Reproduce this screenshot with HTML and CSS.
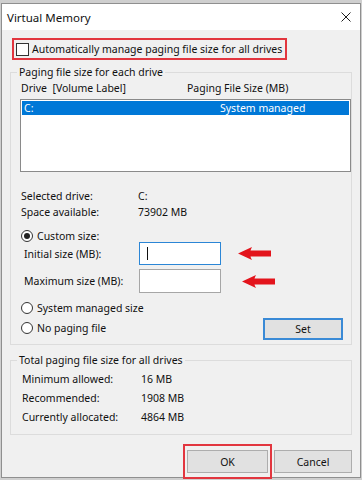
FILE: index.html
```html
<!DOCTYPE html>
<html>
<head>
<meta charset="utf-8">
<link rel="stylesheet" href="styles.css">
</head>
<body>
<div class="window">
  <div class="titlebar">
    <span class="title">Virtual Memory</span>
    <svg class="close" width="10" height="10" viewBox="0 0 10 10"><path d="M0.5 0.5 L9.5 9.5 M9.5 0.5 L0.5 9.5" stroke="#1e1e1e" stroke-width="1" fill="none"/></svg>
  </div>
  <div class="content">
    <div class="hl auto">
      <span class="checkbox"></span>
      <span>Automatically manage paging file size for all drives</span>
    </div>

    <fieldset class="group g1">
      <legend>Paging file size for each drive</legend>
      <div class="cols"><span class="c1">Drive&nbsp; [Volume Label]</span><span>Paging File Size (MB)</span></div>
      <div class="listbox">
        <div class="row sel"><span class="c1">C:</span><span class="c2">System managed</span></div>
      </div>
      <div class="info">
        <span>Selected drive:</span><span>C:</span>
        <span>Space available:</span><span>73902 MB</span>
      </div>
      <div class="radio-row custom"><span class="radio checked"></span><span>Custom size:</span></div>
      <div class="field f1">
        <span class="flabel">Initial size (MB):</span>
        <div class="input focus"><span class="caret"></span></div>
        <svg class="arrow" width="33" height="13" viewBox="0 0 33 13"><path d="M0 6.5 L14 0 Q12.5 3 12.5 3.5 L33 3.5 L33 9.5 L12.5 9.5 Q12.5 10 14 13 Z" fill="#e3141c"/></svg>
      </div>
      <div class="field f2">
        <span class="flabel">Maximum size (MB):</span>
        <div class="input"></div>
        <svg class="arrow a2" width="33" height="13" viewBox="0 0 33 13"><path d="M0 6.5 L14 0 Q12.5 3 12.5 3.5 L33 3.5 L33 9.5 L12.5 9.5 Q12.5 10 14 13 Z" fill="#e3141c"/></svg>
      </div>
      <div class="bottom">
        <div class="radios">
          <div class="radio-row"><span class="radio"></span><span>System managed size</span></div>
          <div class="radio-row"><span class="radio"></span><span>No paging file</span></div>
        </div>
        <div class="btn set">Set</div>
      </div>
    </fieldset>

    <fieldset class="group g2">
      <legend>Total paging file size for all drives</legend>
      <div class="totals">
        <span>Minimum allowed:</span><span>16 MB</span>
        <span>Recommended:</span><span>1908 MB</span>
        <span>Currently allocated:</span><span>4864 MB</span>
      </div>
    </fieldset>

    <div class="actions">
      <div class="hl okwrap"><div class="btn ok">OK</div></div>
      <div class="btn cancel">Cancel</div>
    </div>
  </div>
</div>
</body>
</html>
```

FILE: styles.css
```css
* { box-sizing: border-box; }
html, body { margin: 0; padding: 0; }
body {
  width: 362px;
  height: 480px;
  overflow: hidden;
  background: #cfcfcf;
  font-family: "Noto Sans", "Open Sans", sans-serif;
  font-size: 10.5px;
  color: #111;
}
.window {
  margin: 3px 1px 0 1px;
  height: 475px;
  border: 1px solid #8f8f8f;
  background: #f0f0f0;
  display: flex;
  flex-direction: column;
}
.titlebar {
  height: 26px;
  background: #fff;
  display: flex;
  align-items: center;
  justify-content: space-between;
  padding: 0 9px 0 5px;
  flex: none;
}
.title { font-size: 11.5px; color: #111; }
.close { display: block; }
.content {
  padding: 0 8px;
  display: flex;
  flex-direction: column;
}
.hl { border: 2px solid #e2363f; }
.auto {
  margin: 8px 0 0 2px;
  width: 275px;
  height: 22px;
  display: flex;
  align-items: center;
  padding-left: 2px;
  gap: 3px;
}
.checkbox {
  width: 13px;
  height: 13px;
  border: 1px solid #333;
  background: #fff;
  flex: none;
}
.group {
  margin: 0;
  padding: 0;
  border: 1px solid #dcdcdc;
  min-width: 0;
}
.group legend {
  margin-left: 6px;
  padding: 0 2px;
  line-height: 14px;
}
.g1 { margin-top: 5px; padding-bottom: 4px; }
.cols {
  margin-top: 2px;
  padding-left: 10px;
  height: 14px;
  line-height: 14px;
  display: flex;
}
.cols .c1 { width: 166px; }
.listbox {
  margin: 4px 0 0 9px;
  width: 331px;
  height: 73px;
  border: 1px solid #8a8a8a;
  background: #fff;
  padding: 1px;
}
.row {
  height: 14px;
  line-height: 14px;
  display: flex;
  padding-left: 2px;
}
.row.sel { background: #0078d7; color: #fff; }
.row .c1 { width: 196px; }
.info, .totals {
  display: grid;
  grid-template-columns: 117px auto;
  padding-left: 10px;
}
.info { margin-top: 16px; grid-auto-rows: 16px; line-height: 16px; }
.radio-row {
  display: flex;
  align-items: center;
  height: 16px;
  gap: 4px;
  padding-left: 10px;
}
.custom { margin-top: 8px; }
.radio {
  width: 12px;
  height: 12px;
  border: 1px solid #333;
  border-radius: 50%;
  background: #fff;
  position: relative;
  flex: none;
}
.radio.checked::after {
  content: "";
  position: absolute;
  left: 2px;
  top: 2px;
  width: 6px;
  height: 6px;
  border-radius: 50%;
  background: #222;
}
.field {
  display: flex;
  align-items: center;
  height: 23px;
  padding-left: 13px;
}
.f1 { margin-top: -2px; }
.f2 { margin-top: 4px; height: 24px; }
.f2 .input { height: 24px; }
.flabel { width: 115px; }
.input {
  width: 82px;
  height: 23px;
  border: 1px solid #a6a6a6;
  background: #fff;
  position: relative;
}
.input.focus { border-color: #2b86d6; }
.caret {
  position: absolute;
  left: 7px;
  top: 4px;
  width: 1px;
  height: 13px;
  background: #111;
}
.arrow { margin-left: 17px; display: block; }
.arrow.a2 { margin-left: 21px; }
.bottom {
  display: flex;
  justify-content: space-between;
  align-items: flex-end;
  margin-top: 7px;
  padding-right: 8px;
  height: 40px;
}
.radios { display: flex; flex-direction: column; gap: 4px; align-self: flex-start; }
.radios .radio-row { padding-left: 10px; }
.btn {
  background: #e1e1e1;
  border: 1px solid #adadad;
  display: flex;
  align-items: center;
  justify-content: center;
  color: #111;
}
.set {
  width: 80px;
  height: 22px;
  border: 2px solid #3a8ad6;
}
.g2 { margin-top: 8px; padding-bottom: 7px; }
.totals {
  margin-top: 3px;
  grid-auto-rows: 19px;
  line-height: 19px;
  padding-left: 11px;
  grid-template-columns: 119px auto;
}
.actions {
  display: flex;
  align-items: center;
  margin-top: 9px;
  padding-left: 173px;
  gap: 2px;
}
.okwrap { padding: 4px 2px; }
.ok { width: 81px; height: 23px; }
.cancel { width: 80px; height: 23px; }
```
